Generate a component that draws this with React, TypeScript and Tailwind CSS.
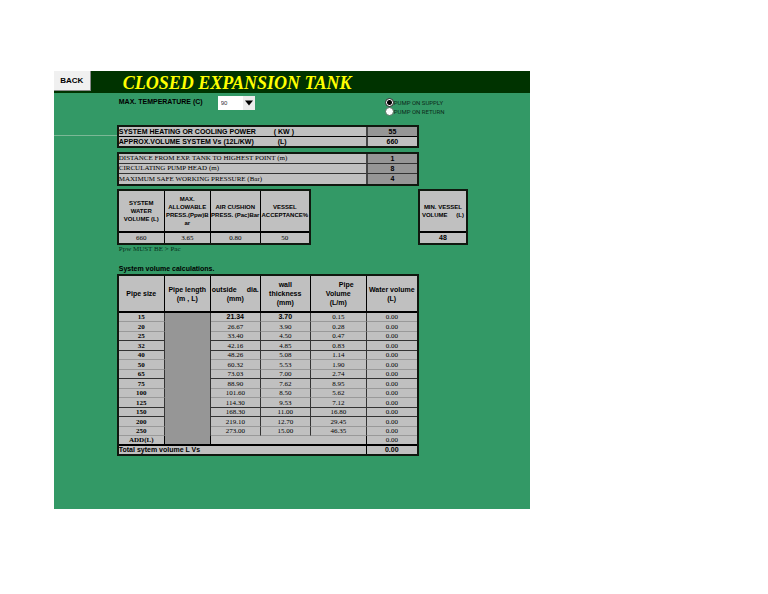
import React from "react";

const serif = "font-['Liberation_Serif',serif]";
const sans = "font-['Liberation_Sans',sans-serif]";

const field =
  "block w-full min-w-0 bg-transparent p-0 text-center outline-none text-[7px] leading-[8px] h-[8px]";

type Pipe = {
  size: string;
  dia: string;
  wall: string;
  volume: string;
  strong?: boolean;
  dark?: boolean;
};

const pipes: Pipe[] = [
  { size: "15", dia: "21.34", wall: "3.70", volume: "0.15", strong: true },
  { size: "20", dia: "26.67", wall: "3.90", volume: "0.28" },
  { size: "25", dia: "33.40", wall: "4.50", volume: "0.47", dark: true },
  { size: "32", dia: "42.16", wall: "4.85", volume: "0.83", dark: true },
  { size: "40", dia: "48.26", wall: "5.08", volume: "1.14" },
  { size: "50", dia: "60.32", wall: "5.53", volume: "1.90" },
  { size: "65", dia: "73.03", wall: "7.00", volume: "2.74", dark: true },
  { size: "75", dia: "88.90", wall: "7.62", volume: "8.95" },
  { size: "100", dia: "101.60", wall: "8.50", volume: "5.62" },
  { size: "125", dia: "114.30", wall: "9.53", volume: "7.12", dark: true },
  { size: "150", dia: "168.30", wall: "11.00", volume: "16.80", dark: true },
  { size: "200", dia: "219.10", wall: "12.70", volume: "29.45" },
  { size: "250", dia: "273.00", wall: "15.00", volume: "46.35" },
];

function Header() {
  return (
    <header className="flex h-[22px] items-start bg-[#003300]">
      <button
        type="button"
        className={`${sans} h-5 w-[37px] shrink-0 border-r border-b border-[#8a8a8a] bg-[#f0f0f0] text-[8px] font-bold text-black`}
      >
        BACK
      </button>
      <h1
        className={`${serif} ml-8 text-[18px] leading-6 font-bold whitespace-nowrap text-[#ffff00] italic`}
      >
        CLOSED EXPANSION TANK
      </h1>
    </header>
  );
}

function Radio({ label, checked }: { label: string; checked?: boolean }) {
  return (
    <label className="flex h-[9px] items-center text-[6px] leading-[9px] whitespace-nowrap text-[#0c2b1b]">
      <input
        type="radio"
        name="pump"
        defaultChecked={checked}
        className="size-[9px] shrink-0 appearance-none rounded-full border border-[#4d6b5a] bg-white checked:border-[#222] checked:bg-[radial-gradient(circle,#000_0_2px,#fff_3px)]"
      />
      {label}
    </label>
  );
}

function Controls() {
  return (
    <div className="flex h-8 items-start pl-[65px]">
      <label
        htmlFor="temperature"
        className="mt-1 w-[99px] shrink-0 text-[7px] leading-[10px] font-bold whitespace-nowrap"
      >
        MAX. TEMPERATURE (C)
      </label>
      <div className="relative mt-[3px] h-[14px] w-[37px] shrink-0">
        <select
          id="temperature"
          defaultValue="90"
          className="block h-full w-full appearance-none bg-white pl-[3px] text-[6px] text-[#333] outline-none"
        >
          <option>80</option>
          <option>90</option>
          <option>100</option>
        </select>
        <span className="pointer-events-none absolute inset-y-0 right-0 flex w-3 items-center justify-center bg-[#ececec]">
          <svg viewBox="0 0 8 6" className="h-[6px] w-2" aria-hidden="true">
            <path d="M0 0.5h8L4 5.5z" fill="#000" />
          </svg>
        </span>
      </div>
      <fieldset className="mt-[5px] ml-[130px] font-['Roboto',sans-serif]">
        <Radio label="PUMP ON SUPPLY" checked />
        <Radio label="PUMP ON RETURN" />
      </fieldset>
    </div>
  );
}

function PowerTable() {
  return (
    <table
      className={`${sans} w-full table-fixed border-separate border-spacing-0 border-2 border-[#10180f] bg-[#c0c0c0] text-[7px] leading-[9px] font-bold`}
    >
      <colgroup>
        <col />
        <col className="w-[17%]" />
      </colgroup>
      <tbody>
        <tr>
          <th scope="row" className="border-b border-black p-0 text-left">
            <span className="flex">
              <span className="w-[155px]">SYSTEM HEATING OR COOLING POWER</span>
              <span>( KW )</span>
            </span>
          </th>
          <td className="border-b border-l-2 border-b-black border-l-[#444] bg-[#969696] p-0">
            <input aria-label="System power" defaultValue="55" className={`${field} font-bold`} />
          </td>
        </tr>
        <tr>
          <th scope="row" className="p-0 text-left">
            <span className="flex">
              <span className="w-[159px]">APPROX.VOLUME SYSTEM Vs (12L/KW)</span>
              <span>(L)</span>
            </span>
          </th>
          <td className="border-l-2 border-[#444] p-0 text-center">660</td>
        </tr>
      </tbody>
    </table>
  );
}

const limits = [
  { label: "DISTANCE FROM EXP. TANK TO HIGHEST POINT (m)", value: "1" },
  { label: "CIRCULATING PUMP HEAD (m)", value: "8" },
  { label: "MAXIMUM SAFE WORKING PRESSURE (Bar)", value: "4" },
];

function LimitsTable() {
  return (
    <table className="w-full table-fixed border-separate border-spacing-0 border-2 border-[#10180f] bg-[#c0c0c0] text-[7px] leading-[9px]">
      <colgroup>
        <col />
        <col className="w-[17%]" />
      </colgroup>
      <tbody>
        {limits.map((row) => (
          <tr key={row.label} className="group h-[10px]">
            <th
              scope="row"
              className={`${serif} border-b border-[#333] p-0 text-left font-normal group-last:border-b-0`}
            >
              {row.label}
            </th>
            <td className="border-b border-l-2 border-b-[#333] border-l-[#444] bg-[#969696] p-0 group-last:border-b-0">
              <input
                aria-label={row.label}
                defaultValue={row.value}
                className={`${field} ${sans} font-bold`}
              />
            </td>
          </tr>
        ))}
      </tbody>
    </table>
  );
}

const headCell =
  "border-r border-b-2 border-black p-0 text-center align-middle font-bold last:border-r-0";
const resultCell = "border-r border-black p-0 text-center last:border-r-0";

function ResultTables() {
  return (
    <div className="grid grid-cols-[194fr_107fr_50fr]">
      <table
        className={`${sans} h-14 w-full table-fixed border-separate border-spacing-0 border-2 border-[#10180f] bg-[#c0c0c0] text-[6px] leading-[8px]`}
      >
        <colgroup>
          <col className="w-[46px]" />
          <col className="w-[46px]" />
          <col className="w-[50px]" />
          <col />
        </colgroup>
        <thead>
          <tr className="h-[42px]">
            <th className={headCell}>
              SYSTEM
              <br />
              WATER
              <br />
              VOLUME (L)
            </th>
            <th className={headCell}>
              MAX.
              <br />
              ALLOWABLE
              <br />
              PRESS.(Ppw)B
              <br />
              ar
            </th>
            <th className={`${headCell} whitespace-nowrap`}>
              AIR CUSHION
              <br />
              PRESS. (Pac)Bar
            </th>
            <th className={`${headCell} whitespace-nowrap`}>
              VESSEL
              <br />
              ACCEPTANCE%
            </th>
          </tr>
        </thead>
        <tbody className={`${serif} text-[7px]`}>
          <tr className="h-[10px]">
            <td className={resultCell}>660</td>
            <td className={resultCell}>3.65</td>
            <td className={resultCell}>0.80</td>
            <td className={resultCell}>50</td>
          </tr>
        </tbody>
      </table>
      <table
        className={`${sans} col-start-3 h-14 w-full table-fixed border-separate border-spacing-0 border-2 border-[#10180f] bg-[#c0c0c0] text-[6px] leading-[8px] font-bold`}
      >
        <thead>
          <tr className="h-[42px]">
            <th className={headCell}>
              MIN. VESSEL
              <span className="flex justify-between px-0.5">
                <span>VOLUME</span>
                <span>(L)</span>
              </span>
            </th>
          </tr>
        </thead>
        <tbody>
          <tr className="h-[10px]">
            <td className={`${resultCell} text-[7px]`}>48</td>
          </tr>
        </tbody>
      </table>
    </div>
  );
}

function PipeRow({ pipe }: { pipe: Pipe }) {
  const line = pipe.dark ? "border-b-[#333]" : "border-b-[#999]";
  const cell = `border-r border-b border-r-[#333] ${line} p-0 last:border-r-0`;
  const accent = pipe.strong ? `${sans} font-bold` : "";
  return (
    <tr className="odd:h-[9px] even:h-[10px]">
      <th scope="row" className={`${cell} font-bold`}>
        {pipe.size}
      </th>
      <td className="border-r border-[#333] bg-[#969696] p-0">
        <input aria-label={`Pipe length ${pipe.size}`} className={field} />
      </td>
      <td className={`${cell} ${accent}`}>{pipe.dia}</td>
      <td className={`${cell} ${accent}`}>{pipe.wall}</td>
      <td className={cell}>{pipe.volume}</td>
      <td className={cell}>0.00</td>
    </tr>
  );
}

function PipeTable() {
  return (
    <table className="w-full table-fixed border-separate border-spacing-0 border-2 border-[#10180f] bg-[#c0c0c0] text-center text-[7px] leading-[8px]">
      <colgroup>
        <col className="w-[46px]" />
        <col className="w-[46px]" />
        <col className="w-[50px]" />
        <col className="w-[50px]" />
        <col className="w-[56px]" />
        <col />
      </colgroup>
      <thead className={`${sans} leading-[9px]`}>
        <tr className="h-[37px]">
          <th className={headCell}>Pipe size</th>
          <th className={headCell}>
            Pipe length
            <br />
            (m , L)
          </th>
          <th className={headCell}>
            <span className="flex justify-between px-px">
              <span>outside</span>
              <span>dia.</span>
            </span>
            (mm)
          </th>
          <th className={headCell}>
            wall
            <br />
            thickness
            <br />
            (mm)
          </th>
          <th className={headCell}>
            <span className="block pl-4">Pipe</span>
            Volume
            <br />
            (L/m)
          </th>
          <th className={headCell}>
            Water volume
            <br />
            (L)
          </th>
        </tr>
      </thead>
      <tbody className={serif}>
        {pipes.map((pipe) => (
          <PipeRow key={pipe.size} pipe={pipe} />
        ))}
        <tr className="h-[10px]">
          <th scope="row" className="border-r border-b-2 border-black p-0 font-bold">
            ADD(L)
          </th>
          <td className="border-r border-b-2 border-black bg-[#969696] p-0">
            <input aria-label="Additional volume" className={field} />
          </td>
          <td colSpan={3} className="border-r border-b-2 border-black p-0" />
          <td className="border-b-2 border-black p-0">0.00</td>
        </tr>
      </tbody>
      <tfoot className={`${sans} font-bold`}>
        <tr>
          <th scope="row" colSpan={5} className="border-r border-black p-0 text-left">
            Total sytem volume L Vs
          </th>
          <td className="p-0">0.00</td>
        </tr>
      </tfoot>
    </table>
  );
}

export default function App() {
  return (
    <div className="min-h-screen bg-white pt-[71px] pb-[85px]">
      <main className={`${sans} ml-[7%] w-[62%] min-w-[476px] bg-[#339966] pb-[53px] text-black`}>
        <Header />
        <Controls />
        <div className="flex">
          <div className="w-[63px] shrink-0">
            <div className="h-[11px] border-b border-[#7cb896]" />
          </div>
          <div className="min-w-0 flex-1 pr-[62px]">
            <div className="mr-[14%] flex flex-col gap-1">
              <PowerTable />
              <LimitsTable />
            </div>
            <div className="mt-[3px]">
              <ResultTables />
            </div>
            <p className={`${serif} pl-0.5 text-[7px] leading-[8px] text-[#06301a]`}>
              Ppw MUST BE &gt; Pac
            </p>
            <div className="mr-[14%]">
              <h2 className="mt-3 pb-px pl-0.5 text-[7px] leading-[8px] font-bold">
                System volume calculations.
              </h2>
              <PipeTable />
            </div>
          </div>
        </div>
      </main>
    </div>
  );
}
